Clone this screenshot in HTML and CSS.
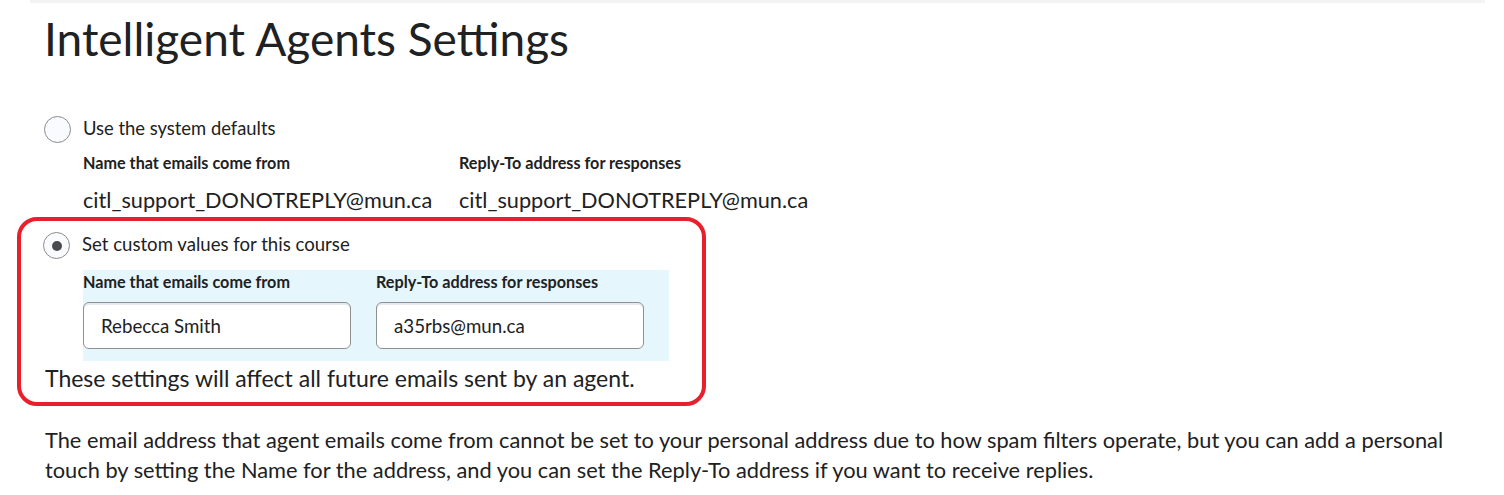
FILE: index.html
```html
<!DOCTYPE html>
<html lang="en">
<head>
<meta charset="utf-8">
<title>Intelligent Agents Settings</title>
<link rel="stylesheet" href="styles.css">
</head>
<body>
<div class="topbar"></div>
<main class="page">
  <h1 class="title">Intelligent Agents Settings</h1>

  <div class="option">
    <span class="radio"></span>
    <span class="option-label">Use the system defaults</span>
  </div>
  <div class="defaults">
    <div class="col col-a">
      <div class="field-label">Name that emails come from</div>
      <div class="value">citl_support_DONOTREPLY@mun.ca</div>
    </div>
    <div class="col">
      <div class="field-label">Reply-To address for responses</div>
      <div class="value">citl_support_DONOTREPLY@mun.ca</div>
    </div>
  </div>

  <section class="highlight">
    <div class="option">
      <span class="radio checked"></span>
      <span class="option-label">Set custom values for this course</span>
    </div>
    <div class="custom">
      <div class="custom-col">
        <div class="field-label">Name that emails come from</div>
        <div class="input">Rebecca Smith</div>
      </div>
      <div class="custom-col">
        <div class="field-label">Reply-To address for responses</div>
        <div class="input">a35rbs@mun.ca</div>
      </div>
    </div>
    <p class="note">These settings will affect all future emails sent by an agent.</p>
  </section>

  <p class="info">The email address that agent emails come from cannot be set to your personal address due to how spam filters operate, but you can add a personal touch by setting the Name for the address, and you can set the Reply-To address if you want to receive replies.</p>
</main>
</body>
</html>
```
FILE: styles.css
```css
html, body {
  margin: 0;
  padding: 0;
  background: #ffffff;
}

body {
  font-family: Lato, "Open Sans", "Liberation Sans", sans-serif;
  color: #202122;
}

.topbar {
  height: 3px;
  margin: 0 19px 0 30px;
  background: #f3f3f4;
}

.page {
  padding: 0 40px 0 45px;
}

.title {
  margin: 8px 0 0 -1px;
  font-size: 46px;
  line-height: 56px;
  font-weight: 400;
  letter-spacing: 0;
}

.option {
  display: flex;
  align-items: center;
  height: 27px;
  margin-top: 49px;
}

.radio {
  box-sizing: border-box;
  width: 27px;
  height: 27px;
  border-radius: 50%;
  border: 1.5px solid #898b8d;
  background: #f9fbff;
  margin-left: -1px;
  display: flex;
  align-items: center;
  justify-content: center;
  flex: none;
}

.radio.checked::after {
  content: "";
  width: 10px;
  height: 10px;
  border-radius: 50%;
  background: #494c4e;
}

.option-label {
  margin-left: 12px;
  font-size: 18.4px;
  line-height: 24px;
  margin-top: -4px;
}

.highlight .option-label {
  font-size: 18.6px;
}

.defaults {
  display: flex;
  margin-left: 38px;
  margin-top: 10px;
}

.col-a {
  width: 376px;
}

.field-label {
  font-size: 16.2px;
  line-height: 20px;
  font-weight: 700;
}

.value {
  margin-top: 13px;
  font-size: 21.7px;
  line-height: 28px;
  margin-bottom: -1px;
}

.highlight {
  box-sizing: border-box;
  width: 689px;
  margin: 4px 0 0 -28px;
  padding: 11px 0 10px 23px;
  border: 4px solid #e81f2c;
  border-radius: 20px;
}

.highlight .option {
  margin-top: 0;
}

.custom {
  display: flex;
  width: 586px;
  margin: 11px 0 0 39px;
  padding: 2px 0 12px;
  background: #e5f6fd;
}

.custom-col {
  width: 294px;
}

.input {
  box-sizing: border-box;
  width: 268px;
  height: 47px;
  margin-top: 10px;
  padding: 0 17px;
  display: flex;
  align-items: center;
  border: 1px solid #8e9193;
  border-radius: 6px;
  background: #ffffff;
  box-shadow: inset 0 2px 0 0 rgba(185, 194, 208, 0.35);
  font-size: 18.7px;
}

.note {
  margin: 3px 0 0 1px;
  font-size: 23px;
  line-height: 28px;
}

.info {
  margin: 19px 0 0;
  font-size: 21.8px;
  line-height: 30px;
}
```
